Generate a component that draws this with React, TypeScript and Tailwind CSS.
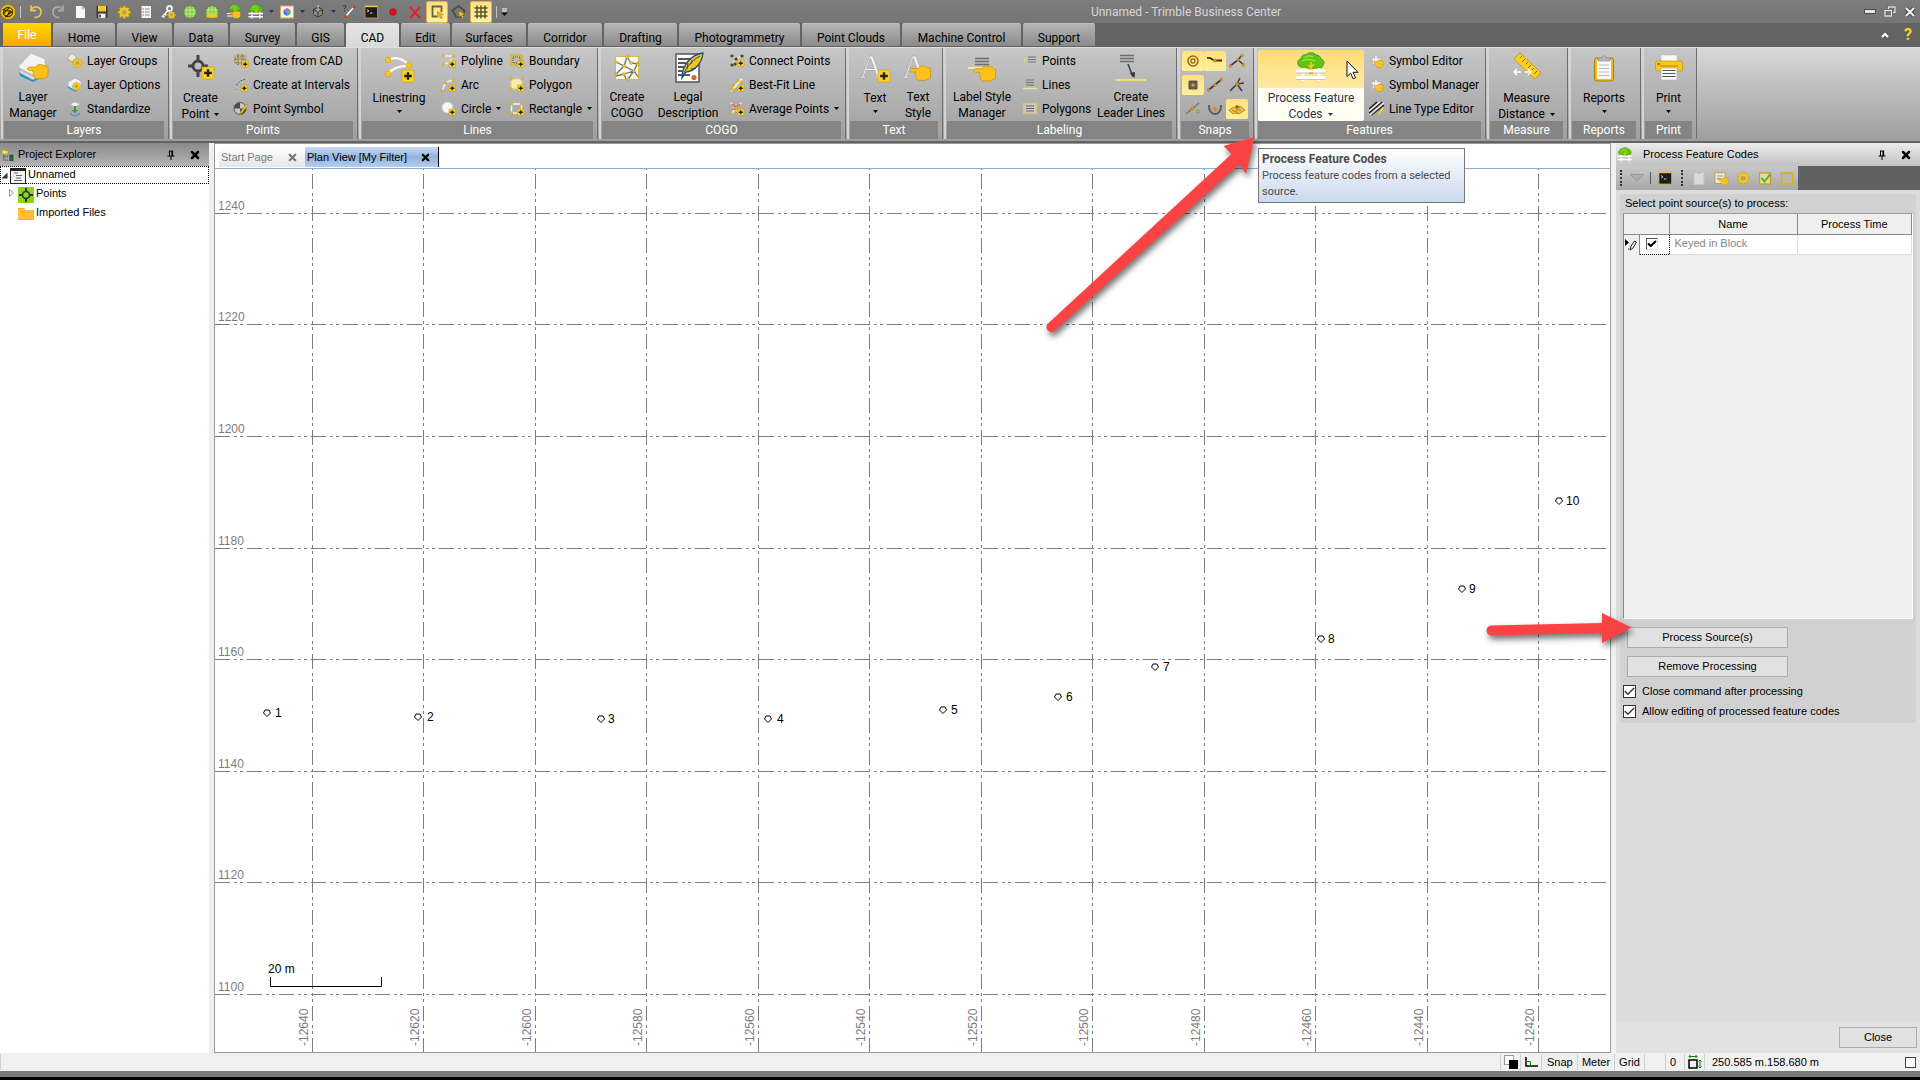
import type { ReactNode } from "react";
import { Check, X } from "lucide-react";

const GOLD = "#f5c518";
const DARK = "#3c3c3c";

type IconProps = { children: ReactNode; size?: 16 | 32 };

function Icon({ children, size = 16 }: IconProps) {
  return (
    <svg
      viewBox={size === 32 ? "0 0 32 32" : "0 0 16 16"}
      className={size === 32 ? "h-8 w-8 shrink-0 overflow-visible" : "h-4 w-4 shrink-0"}
      fill="none"
      aria-hidden="true"
    >
      {children}
    </svg>
  );
}

function Badge({ x = 8, y = 7, s = 7 }: { x?: number; y?: number; s?: number }) {
  return (
    <g>
      <rect x={x} y={y} width={s} height={s} rx={0.5} fill="#fbd324" stroke="#c99a06" strokeWidth={0.6} />
      <path
        d={`M${x + s / 2} ${y + s * 0.18}v${s * 0.64}M${x + s * 0.18} ${y + s / 2}h${s * 0.64}`}
        stroke="#222"
        strokeWidth={s / 5}
      />
    </g>
  );
}

function Hand({ x = 0, y = 0, k = 1 }: { x?: number; y?: number; k?: number }) {
  return (
    <path
      transform={`translate(${x} ${y}) scale(${k})`}
      d="M0 4.2c0-1.2 1-1.7 2-1.7h6L9.500 0.800c2-1.200 5-1 8 0.500l3 1v9.500l-5 2.500H8.500c-2-.4-2.500-1.800-2-3C5.500 10.500 5.300 9.500 6 8.500 5 8 5 7 5.600 6H2C.800 6 0 5.400 0 4.200Z"
      fill="#fcc21b"
      stroke="#c98d05"
      strokeWidth={0.7}
    />
  );
}

const GEAR = "M7 0h2l.4 2 1.6.7L12.700 1.500l1.600 1.600-1.100 1.700.6 1.500 2.200.4v2.400l-2.100.4-.6 1.600 1.100 1.700-1.600 1.600-1.700-1.100-1.600.6L9.100 16H6.900l-.4-2.100-1.600-.6-1.700 1.100-1.600-1.600 1.100-1.700-.6-1.600L0 9.100V6.900l2.100-.4.6-1.600-1.100-1.700 1.600-1.600 1.700 1.100L6.500 2z";

function Gear({ x = 0, y = 0, k = 1 }: { x?: number; y?: number; k?: number }) {
  return (
    <g transform={`translate(${x} ${y}) scale(${k})`}>
      <path d={GEAR} fill="#f8c81c" stroke="#c8960a" strokeWidth={0.6} />
      <circle cx={8} cy={8} r={2.6} fill="#a5a5a5" stroke="#b98b0a" strokeWidth={0.6} />
    </g>
  );
}

function Tree({ x = 0, y = 0, k = 1 }: { x?: number; y?: number; k?: number }) {
  return (
    <g transform={`translate(${x} ${y}) scale(${k})`}>
      <path d="M13 13h6l-1 9h-4z" fill="#d9a514" />
      <path
        d="M3 12c-1-3 1-5 3-5 0-3 3-5 5-4 2-3 8-3 10 0 3 0 5 2 5 4 3 1 4 4 2 6 0 3-4 4-7 3-2 1-4 0-5-2-1 2-4 3-5 1-4 1-8 0-8-3Z"
        fill="#5fc410"
        stroke="#3f8f0b"
        strokeWidth={0.8}
      />
      <path d="M9 6c2-2 6-3 9-1M7 9c3-2 9-2 13 0" stroke="#95e03c" strokeWidth={1.5} />
      <path d="M13 13l3 3 3-4M16 15v-5" stroke="#ecd02a" strokeWidth={1.4} />
    </g>
  );
}

function Fence({ x = 0, y = 0, k = 1 }: { x?: number; y?: number; k?: number }) {
  return (
    <g transform={`translate(${x} ${y}) scale(${k})`} stroke="#fff" strokeWidth={3}>
      <path d="M1 19h29M1 25.500h29M8 16v13M24 16v13" />
      <path d="M1 21h29M1 27.500h29" stroke="#b9b9b9" strokeWidth={0.8} />
    </g>
  );
}

const letterA = (
  <text x={0} y={26} fontFamily="Liberation Serif, serif" fontSize={34} fill="#f4f4f4" stroke="#999" strokeWidth={0.5}>
    A
  </text>
);

function Dots({ at, r = 1.3, fill = GOLD }: { at: number[][]; r?: number; fill?: string }) {
  return (
    <>
      {at.map(([cx, cy]) => (
        <circle key={`${cx}-${cy}`} cx={cx} cy={cy} r={r} fill={fill} stroke="#a67c05" strokeWidth={0.3} />
      ))}
    </>
  );
}

function Caret({ className = "" }: { className?: string }) {
  return (
    <svg viewBox="0 0 5 3" className={`inline-block h-[3px] w-[5px] shrink-0 ${className}`} aria-hidden="true">
      <path d="M0 0h5L2.500 3z" fill="currentColor" />
    </svg>
  );
}

const treeFence16 = (
  <Icon>
    <Tree k={0.5} />
    <Fence k={0.5} />
  </Icon>
);

const consoleIcon = (
  <Icon>
    <rect x={2} y={2} width={12.5} height={12} fill="#1c1c1c" stroke="#c9a63a" strokeWidth={0.8} />
    <path d="M2 2.500h12.500" stroke="#f0c93d" strokeWidth={1.4} />
    <path d="M4 5.500l2 1.300-2 1.300M7 9h2.500" stroke="#ddd" strokeWidth={0.9} />
  </Icon>
);

const gearIcon = (
  <Icon>
    <Gear x={2} y={2} k={0.78} />
  </Icon>
);

const globe = (
  <>
    <circle cx={8} cy={8} r={6} fill="#86d13b" stroke="#5b9f1c" strokeWidth={0.6} />
    <path d="M2.500 6h11M2.500 10h11M8 2v12M5 3c-1.300 3-1.300 7 0 10M11 3c1.300 3 1.300 7 0 10" stroke="#c9efa0" strokeWidth={0.8} />
  </>
);

const quickTools: { label: string; icon: ReactNode; caret?: boolean; on?: boolean }[] = [
  {
    label: "Undo",
    icon: <Icon><path d="M4 4.500C8 1 13.500 3.500 13 8.500c-.4 3.300-3 5-6.500 5M3 1.500v5h5" stroke="#e6c15a" strokeWidth={1.8} /></Icon>,
  },
  {
    label: "Redo",
    icon: <Icon><path d="M12 4.500C8 1 2.500 3.500 3 8.500c.4 3.300 3 5 6.500 5M13 1.500v5H8" stroke="#a9a9a9" strokeWidth={1.8} /></Icon>,
  },
  { label: "New project", icon: <Icon><path d="M4 2h6l3 3v9H4z" fill="#f7f7f7" /><path d="M10 2v3h3" fill="#ccc" stroke="#bbb" strokeWidth={0.6} /></Icon> },
  {
    label: "Save",
    icon: (
      <Icon>
        <path d="M2.500 2h11v12h-11z" fill="#3a3a3a" />
        <rect x={4} y={2} width={8} height={5.5} fill="#f6c82a" />
        <rect x={4.5} y={9.5} width={7} height={4.5} fill="#eee" />
        <path d="M6 10.500v3" stroke="#333" strokeWidth={1.5} />
      </Icon>
    ),
  },
  { label: "Options", icon: gearIcon },
  {
    label: "Properties",
    icon: <Icon><rect x={3.5} y={2} width={9.5} height={12} fill="#f3f3f3" /><path d="M7 5h4.500M7 8h4.500M7 11h4.500" stroke="#888" /><path d="M4.500 5h1.300M4.500 8h1.300M4.500 11h1.300" stroke="#d23c2c" strokeWidth={1.2} /></Icon>,
  },
  {
    label: "Key settings",
    icon: <Icon><circle cx={9.5} cy={4.5} r={2.5} stroke="#f4f4f4" strokeWidth={1.8} /><path d="M8 6.500L2 13M3 12l1.500 1.500M5 10l1.500 1.500" stroke="#f4f4f4" strokeWidth={1.6} /><Gear x={7.5} y={7} k={0.5} /></Icon>,
  },
  { label: "Globe", icon: <Icon>{globe}</Icon> },
  { label: "Geolocate", icon: <Icon>{globe}<path d="M2 10.500h12v3H2z" fill="#f8c828" /><path d="M4 10l-2 2 2 2M12 10l2 2-2 2" stroke="#c98d05" strokeWidth={0.9} /></Icon> },
  { label: "Feature manager", icon: <Icon><Tree x={2} k={0.42} /><path d="M1 9.500h9M1 12h7" stroke="#fff" strokeWidth={1.2} /><Hand x={4} y={7} k={0.5} /></Icon> },
  { label: "Process feature codes", icon: treeFence16, caret: true },
  {
    label: "Color",
    icon: <Icon><rect x={1.5} y={2} width={13} height={12} fill="#f2f2f2" stroke="#d4b04a" /><path d="M8 4l3.500 2L8 8 4.500 6z" fill="#e84fc0" /><path d="M4.500 6L8 8v4l-3.500-2z" fill="#3b7de0" /><path d="M11.500 6L8 8v4l3.500-2z" fill="#42c25a" /></Icon>,
    caret: true,
  },
  {
    label: "View cube",
    icon: <Icon><path d="M8 3l4.500 2.500v5L8 13l-4.500-2.500v-5z" fill="#8b8b8b" stroke="#333" /><path d="M3.500 5.500L8 8l4.500-2.500M8 8v5" stroke="#333" /><path d="M8 1v3M8 5.500v2" stroke="#ddd" /><Dots at={[[3, 11], [13, 11]]} r={1} fill="#d84a3a" /></Icon>,
    caret: true,
  },
  { label: "Measure", icon: <Icon><path d="M4.500 12.500L13 3" stroke="#fff" strokeWidth={1.6} /><Dots at={[[4.5, 12.5], [13, 3]]} r={1.5} fill="#d93025" /><path d="M2 2.500c1-1.500 3-1 2.800.5C4.500 4 3.500 4 3.500 5M3.500 6.500v1" stroke="#333" /></Icon> },
  { label: "Command pane", icon: consoleIcon },
  { label: "Record", icon: <Icon><circle cx={8} cy={8} r={3.3} fill="#e01010" stroke="#8c1010" strokeWidth={0.6} /></Icon> },
  { label: "Delete", icon: <Icon><path d="M3 3l10 11M13 3L3 14" stroke="#e8202a" strokeWidth={2} /></Icon> },
  { label: "Rectangle select", icon: <Icon><path d="M12.500 8V2.500h-9v10H8" stroke="#6d6436" strokeWidth={1.8} /><path d="M8.500 7.500l6 3-2.500.8 1.500 2.700-1.500.8-1.400-2.800-2 1.600z" fill="#f4b81c" stroke="#9a7008" strokeWidth={0.5} /></Icon>, on: true },
  { label: "Polygon select", icon: <Icon><path d="M7.500 2l6 4.500-1.500 6.500H5L1.500 6.500z" stroke="#4a4a4a" strokeWidth={1.7} /><path d="M8 7l6 3-2.500.8 1.500 2.700-1.500.8-1.400-2.800-2 1.600z" fill="#f4c52c" stroke="#9a7008" strokeWidth={0.5} /></Icon> },
  { label: "Grid", icon: <Icon><path d="M4 1.500v13M8 1.500v13M12 1.500v13M1.500 4h13M1.500 8h13M1.500 12h13" stroke="#5c552c" strokeWidth={1.5} /></Icon>, on: true },
];

function TitleBar() {
  return (
    <header className="flex h-[23px] items-center bg-linear-to-b from-[#7c7c7c] to-[#757575]">
      <button aria-label="Application menu" className="flex w-[18px] shrink-0 items-center">
        <svg viewBox="0 0 16 16" className="h-4 w-4" aria-hidden="true">
          <circle cx="8" cy="8" r="7.500" fill="#f6bf12" stroke="#8d6a0a" strokeWidth="0.600" />
          <circle cx="8" cy="8" r="4.600" fill="none" stroke="#4b3b0c" strokeWidth="1.200" />
          <path d="M2.500 5.500L12 8 5 13M3 10l6-6M7 13l3-7" fill="none" stroke="#33290a" strokeWidth="1.100" />
        </svg>
      </button>
      <span className="mr-1 ml-[2px] h-3 w-px shrink-0 bg-[#c4c4c4]" />
      {quickTools.map((tool) => (
        <button key={tool.label} aria-label={tool.label} className="flex h-[22px] shrink-0 items-center">
          <span
            className={
              tool.on
                ? "flex h-[22px] w-[22px] items-center justify-center rounded-xs border border-[#e0b050] bg-linear-to-b from-[#ffe08a] to-[#fff3a0]"
                : "flex w-[22px] items-center justify-center"
            }
          >
            {tool.icon}
          </span>
          {tool.caret && <Caret className="mx-[2px] text-[#26364f]" />}
        </button>
      ))}
      <span className="ml-1 h-3 w-px shrink-0 bg-[#c4c4c4]" />
      <button aria-label="Customize quick access" className="w-[15px] shrink-0 text-white">
        <svg viewBox="0 0 7 8" className="mx-auto h-2 w-[7px]" aria-hidden="true">
          <path d="M1 1h5M1 3h5" stroke="#fff" />
          <path d="M0 4.500h7L3.500 8z" fill="#111" />
        </svg>
      </button>
      <h1 className="flex-1 text-center text-xs text-[#d6d6d6]">Unnamed - Trimble Business Center</h1>
      <button aria-label="Minimize" className="flex w-5 justify-center">
        <svg viewBox="0 0 12 6" className="h-[6px] w-3" aria-hidden="true">
          <rect x="0.500" y="0.500" width="11" height="4" fill="#e4e4e4" stroke="#4b4b4b" />
        </svg>
      </button>
      <button aria-label="Restore" className="flex w-5 justify-center">
        <svg viewBox="0 0 12 11" className="h-[11px] w-3" fill="none" aria-hidden="true">
          <path d="M4.500 3V1h6.500v5.500H9M1 4.500h6.500V10H1z" stroke="#4b4b4b" strokeWidth="2.600" />
          <path d="M4.500 3V1h6.500v5.500H9M1 4.500h6.500V10H1z" stroke="#e4e4e4" strokeWidth="1.400" />
        </svg>
      </button>
      <button aria-label="Close window" className="flex w-5 justify-center">
        <svg viewBox="0 0 12 10" className="h-[10px] w-3" fill="none" aria-hidden="true">
          <path d="M2 1l8 8M10 1L2 9" stroke="#444" strokeWidth="4" />
          <path d="M2 1l8 8M10 1L2 9" stroke="#eee" strokeWidth="2.200" />
        </svg>
      </button>
    </header>
  );
}

const tabs = [
  ["Home", "w-[62px]"],
  ["View", "w-[55px]"],
  ["Data", "w-[54px]"],
  ["Survey", "w-[65px]"],
  ["GIS", "w-[47px]"],
  ["CAD", "w-[53px]"],
  ["Edit", "w-[49px]"],
  ["Surfaces", "w-[74px]"],
  ["Corridor", "w-[74px]"],
  ["Drafting", "w-[73px]"],
  ["Photogrammetry", "w-[121px]"],
  ["Point Clouds", "w-[98px]"],
  ["Machine Control", "w-[119px]"],
  ["Support", "w-[72px]"],
];

function RibbonTabs() {
  return (
    <nav className="flex h-6 gap-[2px] bg-[#636363] pl-[3px]">
      <button className="mb-px w-12 bg-linear-to-b from-[#ffd800] to-[#f5a800] text-xs text-white">File</button>
      {tabs.map(([name, width]) => (
        <button
          key={name}
          className={`${width} rounded-t-xs pt-[5px] text-xs text-black ${
            name === "CAD" ? "bg-linear-to-b from-[#e4e4e4] to-[#d8d8d8]" : "mb-px border-t border-[#c0c0c0] bg-linear-to-b from-[#b4b4b4] to-[#8b8b8b]"
          }`}
        >
          {name}
        </button>
      ))}
      <div className="ml-auto flex items-center">
        <button aria-label="Collapse ribbon" className="flex w-[22px] justify-center">
          <svg viewBox="0 0 8 6" className="h-[6px] w-2" aria-hidden="true">
            <path d="M1 5l3-3 3 3" fill="none" stroke="#fff" strokeWidth="2" />
          </svg>
        </button>
        <button aria-label="Help" className="w-6 text-base leading-4 font-bold text-[#f6d61c]">?</button>
      </div>
    </nav>
  );
}

function Group({ title, width, children }: { title: string; width: string; children?: ReactNode }) {
  return (
    <section
      className={`${width} mr-px flex shrink-0 flex-col border-r border-l-2 border-r-[#6e6e6e] border-l-[#d4d4d4] bg-linear-to-b from-[#c6c6c6] to-[#a0a0a0] pr-1 pl-px`}
    >
      <div className="flex h-[73px]">{children}</div>
      <h2 className="h-[18px] bg-[#848484] text-center text-xs leading-[18px] text-white">{title}</h2>
    </section>
  );
}

type LargeProps = { icon: ReactNode; lines: string[]; width: string; caret?: boolean };

function Large({ icon, lines, width, caret }: LargeProps) {
  return (
    <button className={`${width} flex shrink-0 flex-col items-center pt-1 text-xs leading-4 whitespace-nowrap`}>
      {icon}
      <span className={caret ? "mt-[6px]" : "mt-[5px]"}>{lines[0]}</span>
      <span className="flex items-center">
        {lines[1]}
        {caret && <Caret className={lines[1] ? "ml-[5px]" : "mt-1"} />}
      </span>
    </button>
  );
}

type SmallItem = { label: string; icon: ReactNode; caret?: boolean };

function SmallList({ items, width = "" }: { items: SmallItem[]; width?: string }) {
  return (
    <div className={`${width} flex flex-col gap-px pt-px`}>
      {items.map((item) => (
        <button key={item.label} className="flex h-[23px] items-center gap-1 pl-[5px] text-xs whitespace-nowrap">
          {item.icon}
          {item.label}
          {item.caret && <Caret className="ml-px" />}
        </button>
      ))}
    </div>
  );
}

const layerItems: SmallItem[] = [
  { label: "Layer Groups", icon: <Icon><path d="M1 4l4-3 4 2v4L5 9 1 7z" fill="#ececec" stroke="#999" strokeWidth={0.6} /><path d="M1 6.500l4 2 4-2" stroke="#d7ae2c" /><Gear x={5.5} y={5} k={0.62} /></Icon> },
  { label: "Layer Options", icon: <Icon><path d="M1 5l7-4 6 3v7l-6 4-7-4z" fill="#f0f0f0" stroke="#a5a5a5" strokeWidth={0.6} /><path d="M1 10l7 4 3-2" stroke="#2f9ad6" strokeWidth={1.8} /><Gear x={5} y={5} k={0.55} /></Icon> },
  { label: "Standardize", icon: <Icon><path d="M3 3l5-2 5 2-5 3z" fill="#f6f6f6" stroke="#aaa" strokeWidth={0.6} /><path d="M7 5h2v4h2.500L8 12 4.500 9H7z" fill="#3f9b34" /><path d="M3 12l5 2.500L13 12v1.500L8 15.500 3 13.500z" fill="#2f9ad6" /></Icon> },
];

const pointItems: SmallItem[] = [
  { label: "Create from CAD", icon: <Icon><path d="M2 3h10v7H2zM5 1v11M9 1v11M2 6h10" stroke="#5a5a5a" strokeDasharray="1.500 1" /><Dots at={[[2, 3], [7, 2], [12, 3], [3, 8], [7, 6]]} r={1.2} /><Badge x={9} y={8} s={6.5} /></Icon> },
  { label: "Create at Intervals", icon: <Icon><path d="M2 14C3 7 6 3 14 2" stroke="#444" strokeDasharray="1.500 1.500" /><Dots at={[[2, 14], [3, 10], [14, 2]]} r={1} fill="#eee" /><Badge x={8} y={8} s={6.5} /></Icon> },
  { label: "Point Symbol", icon: <Icon><circle cx={7} cy={7.5} r={6} fill="#c8c8c8" stroke="#555" /><path d="M7 7.500V1.500A6 6 0 0 0 1 7.500zM7 7.500v6a6 6 0 0 0 6-6z" fill="#4a4a4a" /><path d="M15 4l-6 8-2 2 .3-3L13.500 3z" fill="#f8c51c" stroke="#a17404" strokeWidth={0.5} /></Icon> },
];

const lineItems: SmallItem[] = [
  { label: "Polyline", icon: <Icon><path d="M3 3h9M3 11l4-1 4-4" stroke="#eee" strokeWidth={1.6} /><Dots at={[[2.5, 3], [12.5, 3], [2.5, 11]]} /><Badge x={8} y={8} s={6.5} /></Icon> },
  { label: "Arc", icon: <Icon><path d="M2 14C2 8 5 4 13 3" stroke="#eee" strokeWidth={1.6} /><Dots at={[[2, 14], [5, 6], [12.5, 3]]} /><Badge x={8} y={8} s={6.5} /></Icon> },
  { label: "Circle", icon: <Icon><circle cx={6.5} cy={6.5} r={5.5} fill="#f6f6f6" stroke="#ccc" /><Badge x={8} y={8} s={6.5} /></Icon>, caret: true },
];

const areaItems: SmallItem[] = [
  { label: "Boundary", icon: <Icon><rect x={2} y={2} width={11} height={10} fill="#cbbf86" stroke="#d9b32b" strokeWidth={1.4} /><rect x={4} y={4} width={7} height={6} fill="#bcbcbc" stroke="#55502f" strokeDasharray="1 1" /><Badge x={8.5} y={8} s={6.5} /></Icon> },
  { label: "Polygon", icon: <Icon><path d="M2 2h11v10H2z" fill="#f4edb0" stroke="#ddd28a" /><Dots at={[[2, 2], [13, 2], [2, 12]]} /><Badge x={8.5} y={8} s={6.5} /></Icon> },
  { label: "Rectangle", icon: <Icon><path d="M2.500 3h10v9h-10z" stroke="#f2f2f2" strokeWidth={1.4} /><Dots at={[[2.5, 3], [12.5, 3], [2.5, 12]]} /><Badge x={8.5} y={8} s={6.5} /></Icon>, caret: true },
];

const cogoItems: SmallItem[] = [
  { label: "Connect Points", icon: <Icon><path d="M3 3l4 3 5-3M3 12l3-5" stroke="#eee" strokeWidth={1.2} /><Dots at={[[3, 3], [7, 6], [13, 3], [3, 12], [6, 11]]} r={1.6} fill="#444" /><Badge x={8.5} y={7} s={6.5} /></Icon> },
  { label: "Best-Fit Line", icon: <Icon><path d="M2 14L13 2" stroke="#f2f2f2" strokeWidth={2} /><Dots at={[[4, 9], [8, 4], [6, 13], [12, 5], [3, 12]]} /><Badge x={8.5} y={8} s={6.5} /></Icon> },
  { label: "Average Points", icon: <Icon><path d="M2 2l9 11M12 2L3 12" stroke="#f2f2f2" strokeWidth={1.6} /><path d="M3 3l7 7M11 3L5 9" stroke="#e05a40" strokeWidth={1.6} /><Dots at={[[2, 12], [7, 7]]} /><Badge x={8.5} y={8} s={6.5} /></Icon>, caret: true },
];

const labelItems: SmallItem[] = [
  { label: "Points", icon: <Icon><circle cx={3} cy={7} r={1.5} fill="#f3d463" /><path d="M6 4h8M6 6.500h8M6 9h8" stroke="#757575" strokeWidth={1.2} /></Icon> },
  { label: "Lines", icon: <Icon><path d="M4 3h8M4 5.500h8M4 8h8" stroke="#757575" strokeWidth={1.2} /><path d="M1 11.500h14" stroke="#f0e29a" strokeWidth={1.6} /></Icon> },
  { label: "Polygons", icon: <Icon><rect x={1.5} y={2.5} width={13} height={10} fill="#c9c9c9" stroke="#d9c667" strokeWidth={1.4} /><path d="M4 5h8M4 7.500h8M4 10h8" stroke="#666" strokeWidth={1.2} /></Icon> },
];

const starHand = (
  <Icon>
    <path d="M7 1l1.700 4h4.300L9.700 8l1.300 4.500L7 10l-4 2.500L4.200 8 1 5h4.300z" fill="#efefef" stroke="#a0a0a0" strokeWidth={0.5} />
    <path d="M5 8.500h4l1-1.500 4 1v5l-2 1.500H8l-1-2-1.500-2z" fill="#fcc522" stroke="#c08c0a" strokeWidth={0.5} />
  </Icon>
);

const featureItems: SmallItem[] = [
  { label: "Symbol Editor", icon: starHand },
  { label: "Symbol Manager", icon: starHand },
  { label: "Line Type Editor", icon: <Icon><path d="M0 8L8 1M0 12L13 1M2 14L15 4" stroke="#222" strokeWidth={1.6} /><path d="M0 10L11 1M1 14L15 2" stroke="#f2f2f2" strokeWidth={1.2} /><path d="M15 7l-4 6-2 1.500.5-2.500 4-6z" fill="#f8dc3c" stroke="#c9b04a" strokeWidth={0.5} /></Icon> },
];

const snaps: { label: string; on?: boolean; art: ReactNode }[] = [
  { label: "Snap to center", on: true, art: <><circle cx={8} cy={8} r={5} stroke="#9a6b14" strokeWidth={1.6} /><circle cx={8} cy={8} r={2} stroke="#9a6b14" strokeWidth={1.4} /></> },
  { label: "Snap to nearest", on: true, art: <><path d="M0 5c4-1 5 2 8 2.500h7" stroke="#3b2c08" strokeWidth={1.8} /><Dots at={[[8, 7.5]]} r={1.8} fill="#e38b13" /></> },
  { label: "Snap to branch", art: <><path d="M1 13L9 7l4-5M9 7l6 5" stroke={DARK} strokeWidth={1.6} /><Dots at={[[1.5, 13], [9, 7], [13, 2.5], [14.5, 12]]} r={1.5} fill="#d9922a" /></> },
  { label: "Snap to point", on: true, art: <><path d="M4 4h8v8H4z" fill="#5a5a5a" stroke="#5a5a5a" /><Dots at={[[8, 8]]} r={1.8} fill="#ee9a1c" /></> },
  { label: "Snap to midpoint", art: <><path d="M1.500 13L14.500 2.500" stroke={DARK} strokeWidth={1.8} /><Dots at={[[1.5, 13], [8, 8], [14.5, 2.5]]} r={1.6} fill="#d9922a" /></> },
  { label: "Snap to intersection", art: <><path d="M1 14l7-7 7-1M8 7l3-6M8 7l5 7" stroke={DARK} strokeWidth={1.5} /><Dots at={[[8, 7]]} r={1.8} fill="#e38b13" /></> },
  { label: "Snap to tangent", art: <><path d="M1 13L14 2" stroke="#777" strokeWidth={1.6} /><Dots at={[[7.5, 7.5]]} r={1.8} fill="#e38b13" /><circle cx={13} cy={10.5} r={1.5} stroke="#b58937" /></> },
  { label: "Snap to arc", art: <><path d="M2 4c-1 12 13 12 12 0" stroke="#5c5c5c" strokeWidth={2} /><Dots at={[[8, 8]]} r={1.8} fill="#e38b13" /></> },
  { label: "Snap to surface", on: true, art: <><path d="M0 9l5-3 3 1 3-2 5 4-6 4-3-1-3 1z" fill="#e8bf3f" stroke="#a77b17" strokeWidth={0.8} /><path d="M3 9l6 3M6 7l6 3M11 6l-5 5" stroke="#a77b17" strokeWidth={0.7} /><circle cx={8} cy={5.5} r={1.6} fill="#9a5c12" /></> },
];

function Ribbon() {
  return (
    <div className="relative z-10 flex border-t border-[#dedede] border-b-2 border-b-[#646464] bg-linear-to-b from-[#d8d8d8] to-[#9e9e9e] pb-[2px] pl-px">
      <Group title="Layers" width="w-[168px]">
        <Large
          width="w-[58px]"
          lines={["Layer", "Manager"]}
          icon={
            <Icon size={32}>
              <path d="M2 20l14 7 6-4v4l-6 3L3 24z" fill="#1f93cf" />
              <path d="M2 17l14 7 12-7v4l-12 7L3 21z" fill="#dadada" stroke="#9b9b9b" strokeWidth={0.5} />
              <path d="M2 14L14 1l14 6v9l-12 7-14-7z" fill="#f3f3f3" stroke="#b0b0b0" strokeWidth={0.6} />
              <path d="M2 14l14 6 12-7" stroke="#fff" />
              <Hand x={10.5} y={12.5} k={1} />
            </Icon>
          }
        />
        <SmallList items={layerItems} />
      </Group>
      <Group title="Points" width="w-[188px]">
        <Large
          width="w-[55px]"
          caret
          lines={["Create", "Point"]}
          icon={
            <Icon size={32}>
              <circle cx={13} cy={14} r={5} stroke="#444" strokeWidth={3} />
              <path d="M13 3v7M13 18v7M3 14h6M17 14h6" stroke="#444" strokeWidth={3} />
              <Badge x={17} y={15} s={12} />
            </Icon>
          }
        />
        <SmallList items={pointItems} />
      </Group>
      <Group title="Lines" width="w-[239px]">
        <Large
          width="w-[74px]"
          caret
          lines={["Linestring"]}
          icon={
            <Icon size={32}>
              <path d="M5 8c8-4 16-1 22 6M5 22c4-5 10-9 22-8" stroke="#f8f8f8" strokeWidth={2.4} />
              <Dots at={[[5, 8], [26, 13], [5, 22]]} r={3} />
              <Badge x={19} y={18} s={12} />
            </Icon>
          }
        />
        <SmallList items={lineItems} width="w-[68px]" />
        <SmallList items={areaItems} />
      </Group>
      <Group title="COGO" width="w-[247px]">
        <Large
          width="w-[50px]"
          lines={["Create", "COGO"]}
          icon={
            <Icon size={32}>
              <rect x={4.5} y={4.5} width={23} height={23} fill="#fafafa" stroke="#d9b84a" />
              <path d="M5 10l8 4 3-9M13 14l-8 8M13 14l10 5 4-9M16 5l4 6 7 1M23 19l-6 8M5 24l8-2 2 5M13 22l10-3 4 6" stroke="#6f6f6f" strokeWidth={1.3} />
              <Dots at={[[5, 10], [13, 14], [20, 11], [23, 19], [13, 22], [16, 5], [27, 12], [5, 22], [17, 27]]} r={1.5} />
            </Icon>
          }
        />
        <Large
          width="w-[72px]"
          lines={["Legal", "Description"]}
          icon={
            <Icon size={32}>
              <rect x={4} y={2} width={23} height={28} fill="#fff" stroke="#555" strokeWidth={1.5} />
              <path d="M6 7h12M6 11h8M6 15h7M6 19h6M6 23h12" stroke="#222" strokeWidth={1.5} />
              <path d="M10 26C10 14 18 3 31 1c-1 9-7 18-17 19z" fill="#f8c51c" stroke="#1f4e86" strokeWidth={1.3} />
              <path d="M10 26C13 17 19 9 28 4M15 17l1-6M19 17l5-1M19 12l1-4" stroke="#1f4e86" strokeWidth={1} />
              <circle cx={22} cy={25.5} r={2.6} fill="#d3692a" />
            </Icon>
          }
        />
        <SmallList items={cogoItems} />
      </Group>
      <Group title="Text" width="w-[96px]">
        <Large width="w-[50px]" caret lines={["Text"]} icon={<Icon size={32}>{letterA}<Badge x={19} y={18} s={12} /></Icon>} />
        <Large width="w-[36px]" lines={["Text", "Style"]} icon={<Icon size={32}>{letterA}<Hand x={8} y={14} k={1} /></Icon>} />
      </Group>
      <Group title="Labeling" width="w-[233px]">
        <Large
          width="w-[70px]"
          lines={["Label Style", "Manager"]}
          icon={
            <Icon size={32}>
              <path d="M9 6.500h14M9 9.500h14M9 12.500h14" stroke="#6d6d6d" strokeWidth={1.6} />
              <path d="M2 16h28" stroke="#f3e8b0" strokeWidth={2} />
              <Hand x={8} y={14} k={1.05} />
            </Icon>
          }
        />
        <SmallList items={labelItems} width="w-[76px]" />
        <Large
          width="w-[76px]"
          lines={["Create", "Leader Lines"]}
          icon={
            <Icon size={32}>
              <path d="M5 3.500h14M5 6.500h14M5 9.500h14" stroke="#6d6d6d" strokeWidth={1.6} />
              <path d="M13 12l5 13" stroke="#444" strokeWidth={1.6} />
              <path d="M15 21l5-1-.5 6z" fill="#333" />
              <path d="M1 28h30" stroke="#f5df6c" strokeWidth={2} />
            </Icon>
          }
        />
      </Group>
      <Group title="Snaps" width="w-[76px]">
        <div className="grid grid-cols-3 content-start gap-y-1 pt-[3px] pl-px">
          {snaps.map((snap) => (
            <button
              key={snap.label}
              aria-label={snap.label}
              className={`flex h-5 w-[22px] items-center justify-center rounded-xs ${snap.on ? "bg-linear-to-b from-[#ffe07e] to-[#fff09a]" : ""}`}
            >
              <Icon>{snap.art}</Icon>
            </button>
          ))}
        </div>
      </Group>
      <Group title="Features" width="w-[231px]">
        <div className="relative flex pt-[2px]">
          <button className="flex w-[106px] flex-col items-center rounded-xs bg-linear-to-b from-[#ffdc72] from-0% via-[#ffe9a4] via-53% to-[#fffdf2] to-53% pt-[2px] text-xs leading-4 text-[#26364f]">
            <Icon size={32}>
              <Tree />
              <Fence />
            </Icon>
            <span className="mt-[6px]">Process Feature</span>
            <span className="flex items-center">
              Codes
              <Caret className="ml-[6px]" />
            </span>
          </button>
          <svg viewBox="0 0 13 20" className="absolute top-3 left-[88px] h-5 w-[13px]" aria-hidden="true">
            <path d="M1 1v15.500l3.600-3.300 2.600 5.600 2.400-1.100-2.600-5.400h5z" fill="#fff" stroke="#111" />
          </svg>
          <div
            role="tooltip"
            className="absolute top-[100px] left-0 w-[207px] border border-[#767676] bg-linear-to-b from-white to-[#c9d9ee] px-[3px] pt-[2px] pb-[2px] text-xs leading-4 text-[#4c4c4c]"
          >
            <strong className="block pb-px font-bold">Process Feature Codes</strong>
            <p className="text-[11px] leading-4">Process feature codes from a selected source.</p>
          </div>
        </div>
        <SmallList items={featureItems} />
      </Group>
      <Group title="Measure" width="w-[81px]">
        <Large
          width="w-[73px]"
          caret
          lines={["Measure", "Distance"]}
          icon={
            <Icon size={32}>
              <path d="M9 1l21 20-6 6L3 7z" fill="#f9cf1e" stroke="#b98c0a" strokeWidth={0.7} />
              <path d="M11 4L9 6M14 7l-3 3M17 10l-2 2M20 13l-3 3M23 16l-2 2M26 19l-3 3" stroke="#8a6a08" />
              <path d="M3 20h7M14 20h6M6 17l-3 3 3 3M17 17l3 3-3 3" stroke="#fff" strokeWidth={1.5} />
            </Icon>
          }
        />
      </Group>
      <Group title="Reports" width="w-[72px]">
        <Large
          width="w-[64px]"
          caret
          lines={["Reports"]}
          icon={
            <Icon size={32}>
              <rect x={6.5} y={6} width={19} height={23} rx={2} fill="#f4bb12" stroke="#a87f08" />
              <rect x={9} y={8} width={14} height={19} fill="#fafafa" />
              <path d="M11 13h10M11 16.500h10M11 20h10M11 23.500h10" stroke="#bbb" strokeWidth={1.2} />
              <path d="M10 9V6h4c0-3 4-3 4 0h4v3z" fill="#b8b8b8" stroke="#888" strokeWidth={0.6} />
            </Icon>
          }
        />
      </Group>
      <Group title="Print" width="w-[55px]">
        <Large
          width="w-[47px]"
          caret
          lines={["Print"]}
          icon={
            <Icon size={32}>
              <rect x={8} y={3} width={16} height={8} fill="#fafafa" stroke="#bbb" strokeWidth={0.6} />
              <rect x={2.5} y={9} width={27} height={10} rx={1.5} fill="#f9c81c" stroke="#c08e08" strokeWidth={0.6} />
              <path d="M7 14h18" stroke="#b98708" />
              <rect x={4.5} y={11} width={2} height={2} fill="#d5331c" />
              <rect x={8} y={16} width={16} height={12} fill="#fafafa" stroke="#aaa" strokeWidth={0.6} />
              <path d="M9.500 18.500h13M9.500 21.500h13M9.500 24.500h13" stroke="#555" strokeWidth={1.2} />
            </Icon>
          }
        />
      </Group>
    </div>
  );
}

function PanelHeader({ icon, title, className }: { icon: ReactNode; title: string; className: string }) {
  return (
    <div className={`${className} flex h-[23px] items-center bg-linear-to-b pr-2 text-[11px]`}>
      {icon}
      <h2 className="flex-1">{title}</h2>
      <button aria-label="Pin panel" className="mr-[14px]">
        <svg viewBox="0 0 8 10" className="h-[10px] w-2" fill="none" aria-hidden="true">
          <path d="M2 1h4M2.500 1v5M5 1v5M0.500 6h7M4 6v4" stroke="#000" strokeWidth="1" />
          <path d="M5.500 1v5" stroke="#000" strokeWidth="1.200" />
        </svg>
      </button>
      <button aria-label="Close panel">
        <X className="h-3 w-3" strokeWidth={5} />
      </button>
    </div>
  );
}

function ProjectExplorer() {
  return (
    <aside className="flex w-[209px] shrink-0 flex-col bg-white text-[11px]">
      <PanelHeader
        title="Project Explorer"
        className="from-[#8a8a8a] to-[#b4b4b4]"
        icon={
          <svg viewBox="0 0 14 14" className="mr-1 ml-[2px] h-3 w-3" aria-hidden="true">
            <path d="M0 1h3l1 1h3v4H0z" fill="#f6e05a" stroke="#8d7b10" strokeWidth="0.600" />
            <path d="M2 7v6M2 9h6M2 13h6" stroke="#222" strokeDasharray="1 1" fill="none" />
            <path d="M9 7h4v3H9zM9 11h4v3H9z" fill="#0a7d18" stroke="#222" strokeWidth="0.600" />
          </svg>
        }
      />
      <ul className="flex-1 leading-[18px]">
        <li className="flex h-[18px] items-center border border-dotted border-black">
          <svg viewBox="0 0 7 7" className="h-[7px] w-[7px]" aria-hidden="true">
            <path d="M6.500 0.500v6h-6z" fill="#333" />
          </svg>
          <svg viewBox="0 0 16 16" className="mt-[2px] mr-[2px] ml-[2px] h-4 w-4" aria-hidden="true">
            <rect x="0.500" y="0.500" width="15" height="15" fill="#f2f2f2" stroke="#222" />
            <path d="M0 1.500h16" stroke="#222" strokeWidth="3" />
            <path d="M4 5h4M6 7.500h6M6 10h5M4 12.500h8" stroke="#666" />
          </svg>
          <span className="-mt-[2px]">Unnamed</span>
        </li>
        <li className="flex h-[19px] items-center pl-[9px]">
          <svg viewBox="0 0 5 8" className="-mt-px h-2 w-[5px]" aria-hidden="true">
            <path d="M0.500 0.500L4.500 4l-4 3.500z" fill="#fff" stroke="#999" />
          </svg>
          <svg viewBox="0 0 16 16" className="mt-[2px] mr-[2px] ml-1 h-4 w-4" fill="none" aria-hidden="true">
            <rect width="16" height="16" rx="1" fill="#8bd21c" />
            <circle cx="8" cy="8" r="3.500" stroke="#333" strokeWidth="1.600" />
            <path d="M8 1v4M8 11v4M1 8h4M11 8h4" stroke="#333" strokeWidth="2" />
          </svg>
          <span className="-mt-[2px]">Points</span>
        </li>
        <li className="flex h-[19px] items-center pl-[18px]">
          <svg viewBox="0 0 16 13" className="mt-[2px] mr-[2px] h-[13px] w-4" aria-hidden="true">
            <path d="M0 1h6l1 2h9v10H0z" fill="#f7a91b" />
            <path d="M1 12V3h5l1 1h8" fill="none" stroke="#ffd978" />
            <path d="M2 5.500h13.500V12H2z" fill="#fdc132" />
          </svg>
          <span className="-mt-[2px]">Imported Files</span>
        </li>
      </ul>
    </aside>
  );
}

// plan view geometry, in canvas pixels
const eastings = [
  { x: 97.5, label: "-12640" },
  { x: 208.5, label: "-12620" },
  { x: 320.5, label: "-12600" },
  { x: 431.5, label: "-12580" },
  { x: 543.5, label: "-12560" },
  { x: 654.5, label: "-12540" },
  { x: 766.5, label: "-12520" },
  { x: 877.5, label: "-12500" },
  { x: 989.5, label: "-12480" },
  { x: 1100.5, label: "-12460" },
  { x: 1212.5, label: "-12440" },
  { x: 1323.5, label: "-12420" },
];

const northings = [
  { y: 44.5, label: "1240" },
  { y: 155.5, label: "1220" },
  { y: 267.5, label: "1200" },
  { y: 379.5, label: "1180" },
  { y: 490.5, label: "1160" },
  { y: 602.5, label: "1140" },
  { y: 713.5, label: "1120" },
  { y: 825.5, label: "1100" },
];

const surveyPoints = [
  { id: 1, x: 52, y: 544, dx: 8 },
  { id: 2, x: 203, y: 548, dx: 9 },
  { id: 3, x: 386, y: 550, dx: 7 },
  { id: 4, x: 553, y: 550, dx: 9 },
  { id: 5, x: 728, y: 541, dx: 8 },
  { id: 6, x: 843, y: 528, dx: 8 },
  { id: 7, x: 940, y: 498, dx: 8 },
  { id: 8, x: 1106, y: 470, dx: 7 },
  { id: 9, x: 1247, y: 420, dx: 7 },
  { id: 10, x: 1344, y: 332, dx: 7 },
];

function PlanView() {
  return (
    <main className="flex min-w-0 flex-1 flex-col border border-[#9a9a9a] bg-white">
      <div className="flex h-[25px] items-end border-b border-[#90abd0] pl-1 text-[11px]">
        <div className="mb-px flex h-5 items-center gap-[14px] bg-linear-to-b from-white to-[#e6e6e6] pr-[7px] pl-[2px] text-[#7a7a7a]">
          <button>Start Page</button>
          <button aria-label="Close Start Page">
            <X className="h-[11px] w-[11px]" strokeWidth={5} />
          </button>
        </div>
        <div className="mb-px flex h-5 items-center gap-[13px] border-r border-black bg-linear-to-b from-[#cbdcf2] via-[#94b3db] to-[#b4cdec] pr-[7px] pl-[2px]">
          <button className="whitespace-nowrap">Plan View [My Filter]</button>
          <button aria-label="Close Plan View">
            <X className="h-[11px] w-[11px]" strokeWidth={5} />
          </button>
        </div>
      </div>
      <svg className="block min-h-0 w-full flex-1 font-['Liberation_Sans',Arial,sans-serif] text-xs" aria-label="Plan view">
        <g stroke="#7d7d7d" strokeDasharray="15 4 3 3 3 4" shapeRendering="crispEdges">
          {northings.map(({ y }) => (
            <line key={y} x1="0" x2="1392" y1={y} y2={y} />
          ))}
          {eastings.map(({ x }) => (
            <line key={x} x1={x} x2={x} y1="-27" y2="1200" />
          ))}
        </g>
        <g fill="#7d7d7d">
          {northings.map(({ y, label }) => (
            <text key={y} x="3" y={y - 4}>
              {label}
            </text>
          ))}
          {eastings.map(({ x, label }) => (
            <text key={x} transform={`translate(${x - 5} 877) rotate(-90)`}>
              {label}
            </text>
          ))}
        </g>
        <path d="M55.500 808v9.500h111V808" fill="none" stroke="#000" />
        <text x="53" y="804">
          20 m
        </text>
        {surveyPoints.map(({ id, x, y, dx }) => (
          <g key={id}>
            <path d={`M${x - 2} ${y - 3}h4l1.500 3-3.500 3.500-3.500-3.500z`} fill="none" stroke="#000" />
            <text x={x + dx} y={y + 4}>
              {id}
            </text>
          </g>
        ))}
      </svg>
    </main>
  );
}

function PanelCheckbox({ label }: { label: string }) {
  return (
    <label className="flex h-5 items-center gap-[6px]">
      <span className="grid">
        <input type="checkbox" defaultChecked className="col-start-1 row-start-1 h-[13px] w-[13px] appearance-none border border-[#333] bg-white" />
        <Check className="pointer-events-none col-start-1 row-start-1 h-[13px] w-[13px] text-[#333]" strokeWidth={2.5} />
      </span>
      {label}
    </label>
  );
}

function FeatureCodesPanel() {
  return (
    <aside className="flex w-[304px] shrink-0 flex-col bg-[#dcdcdc] text-[11px]">
      <PanelHeader
        title="Process Feature Codes"
        className="from-[#ececec] to-[#c2c2c2]"
        icon={<span className="mr-[10px] ml-px">{treeFence16}</span>}
      />
      <div className="flex h-6 bg-[#616161]">
        <div className="flex w-[182px] items-center bg-linear-to-b from-[#c8c8c8] to-[#a8a8a8]">
          <span className="ml-1 h-4 border-l-2 border-dotted border-[#333]" />
          <svg viewBox="0 0 14 8" className="ml-2 h-2 w-[14px]" aria-hidden="true">
            <path d="M0.500 0.500h13L7 7z" fill="#b0b0b0" stroke="#999" />
          </svg>
          <span className="mr-[6px] ml-[6px] h-3 w-px bg-[#555]" />
          <button aria-label="Command pane">{consoleIcon}</button>
          <span className="mr-2 ml-2 h-4 border-l-2 border-dotted border-[#333]" />
          <div className="flex gap-[6px]">
            <button aria-label="Paste">
              <Icon><rect x={3} y={2.5} width={10} height={12} fill="#dadada" stroke="#c4c4c4" /><path d="M6 1.500h4v2.500H6z" fill="#c0c0c0" /></Icon>
            </button>
            <button aria-label="Report options">
              <Icon><rect x={2} y={2.5} width={10} height={11} fill="#e8e8e8" stroke="#c9a63a" /><path d="M4 6h6M4 8.500h4" stroke="#999" /><path d="M5 1.500h4v2H5z" fill="#aaa" /><Hand x={5} y={7.5} k={0.5} /></Icon>
            </button>
            <button aria-label="Settings">{gearIcon}</button>
            <button aria-label="Select all">
              <Icon><rect x={2.5} y={3} width={11} height={11} fill="#e0dca8" stroke="#c9a016" strokeWidth={1.3} /><path d="M4.500 8l3 3.500L13.500 4" stroke="#55b01c" strokeWidth={2} /></Icon>
            </button>
            <button aria-label="Select none">
              <Icon><rect x={2.5} y={3} width={11} height={11} fill="#b8b8b0" stroke="#d9b01c" strokeWidth={1.5} /></Icon>
            </button>
          </div>
        </div>
      </div>
      <div className="mx-1 mt-1 bg-[#d1d1d1] pr-[3px] pb-[2px] pl-[3px]">
        <p className="pl-[2px] leading-[19px]">Select point source(s) to process:</p>
        <div className="h-[406px] border border-t-[#9a9a9a] border-r-white border-b-white border-l-[#8a8a8a] bg-[#efefef]">
          <table className="w-full table-fixed border-collapse">
            <colgroup>
              <col className="w-[15px]" />
              <col className="w-[30px]" />
              <col className="w-[128px]" />
              <col />
            </colgroup>
            <thead>
              <tr className="h-5">
                <th colSpan={2} className="border-r border-b border-[#888]" aria-label="Selected" />
                <th className="border-r border-b border-[#888] font-normal">Name</th>
                <th className="border-r border-b border-[#888] font-normal">Process Time</th>
              </tr>
            </thead>
            <tbody>
              <tr className="h-5 bg-white">
                <td className="border-r border-[#888] bg-[#efefef]">
                  <svg viewBox="0 0 13 13" className="h-[13px] w-[13px]" aria-hidden="true">
                    <path d="M1 1l4 3.500L1 8z" fill="#000" />
                    <path d="M6 12l1-4 3.500-5 2 1L9 10zM4 11h1" fill="none" stroke="#222" />
                  </svg>
                </td>
                <td className="border border-dotted border-black">
                  <span className="ml-[6px] grid h-3 w-3">
                    <input
                      type="checkbox"
                      defaultChecked
                      aria-label="Process Keyed in Block"
                      className="col-start-1 row-start-1 h-3 w-3 appearance-none border border-t-[#555] border-r-[#ddd] border-b-[#ddd] border-l-[#555] bg-white"
                    />
                    <Check className="pointer-events-none col-start-1 row-start-1 m-px h-[10px] w-[10px]" strokeWidth={5} />
                  </span>
                </td>
                <td className="border-r border-b border-[#ddd] px-[5px] pb-[2px] leading-4 text-[#858585]">Keyed in Block</td>
                <td className="border-r border-b border-[#ddd]" />
              </tr>
            </tbody>
          </table>
        </div>
        <div className="flex flex-col items-start gap-2 pt-2 pl-1">
          <button className="h-[21px] w-[161px] border border-[#adadad] bg-[#e1e1e1]">Process Source(s)</button>
          <button className="h-[21px] w-[161px] border border-[#adadad] bg-[#e1e1e1]">Remove Processing</button>
        </div>
        <div className="pt-1">
          <PanelCheckbox label="Close command after processing" />
          <PanelCheckbox label="Allow editing of processed feature codes" />
        </div>
      </div>
      <div className="mt-auto flex justify-end bg-[#e2e2e2] px-[3px] pt-[6px] pb-[5px]">
        <button className="h-[21px] w-[78px] border border-[#adadad] bg-[#e1e1e1]">Close</button>
      </div>
    </aside>
  );
}

function StatusBar() {
  return (
    <footer className="flex h-[18px] items-center bg-[#f0f0f0] text-[11px] leading-[18px] *:h-4 *:border-l *:border-[#d0d0d0] *:leading-4">
      <div className="flex-1 border-l-0" />
      <button aria-label="Background color" className="flex w-5 justify-center">
        <svg viewBox="0 0 14 14" className="mt-px h-[14px] w-[14px]" aria-hidden="true">
          <rect x="0.500" y="0.500" width="9" height="9" fill="#fff" stroke="#999" />
          <rect x="5" y="5" width="9" height="9" fill="#000" />
        </svg>
      </button>
      <button aria-label="Right angle" className="flex w-[21px] items-center justify-center">
        <svg viewBox="0 0 13 10" className="h-[10px] w-[13px]" fill="none" aria-hidden="true">
          <path d="M1 0v9h12" stroke="#000" strokeWidth="1.500" />
          <path d="M1 4.500h4.500V9" stroke="#0a8a0a" />
        </svg>
      </button>
      <button className="w-9 pl-[5px] text-left">Snap</button>
      <button className="w-[37px]">Meter</button>
      <button className="w-[30px]">Grid</button>
      <span className="w-[21px]" />
      <span className="w-[19px] pl-[4px]">0</span>
      <button aria-label="Coordinate display" className="flex w-5 items-center justify-center">
        <svg viewBox="0 0 14 14" className="h-[14px] w-[14px]" fill="none" aria-hidden="true">
          <rect x="1" y="5" width="8" height="8" stroke="#000" strokeWidth="1.500" />
          <path d="M1 1.500h8M2.500 0L1 1.500 2.500 3M7.500 0L9 1.500 7.500 3M12 5v8M10.500 6.500L12 5l1.500 1.500M10.500 11.500L12 13l1.500-1.500" stroke="#0a8a0a" />
        </svg>
      </button>
      <div className="flex w-[216px] items-center justify-between pr-1 pl-[7px]">
        <span>250.585 m.158.680 m</span>
        <input type="checkbox" aria-label="Notifications" className="h-[11px] w-[11px] appearance-none border border-[#444] bg-white" />
      </div>
    </footer>
  );
}

function Arrows() {
  return (
    <svg
      className="pointer-events-none absolute top-0 left-0 z-20 h-[700px] w-[1660px] fill-[#fc4343] drop-shadow-[2px_4px_3px_rgba(0,0,0,0.55)]"
      aria-hidden="true"
    >
      <path d="M1047.500 324L1231.500 154 1223.500 146 1254.500 137 1246 174 1239.500 164 1054.500 331A5 5 0 0 1 1047.500 324Z" />
      <path d="M1491 625.500L1602 623V613L1631.500 627.500 1602 643V633L1492 635.500A5 5 0 0 1 1491 625.500Z" />
    </svg>
  );
}

export default function App() {
  return (
    <div className="relative flex min-h-screen flex-col bg-[#efefef] font-['Liberation_Sans',Arial,sans-serif] text-black">
      <div className="font-['Roboto','Open_Sans',sans-serif]">
        <TitleBar />
        <RibbonTabs />
        <Ribbon />
      </div>
      <div className="flex flex-1">
        <ProjectExplorer />
        <div className="w-[5px] shrink-0" />
        <PlanView />
        <div className="w-[5px] shrink-0" />
        <FeatureCodesPanel />
      </div>
      <StatusBar />
      <div className="h-[6px] bg-[#787878]" />
      <div className="h-[3px] bg-black" />
      <Arrows />
    </div>
  );
}
